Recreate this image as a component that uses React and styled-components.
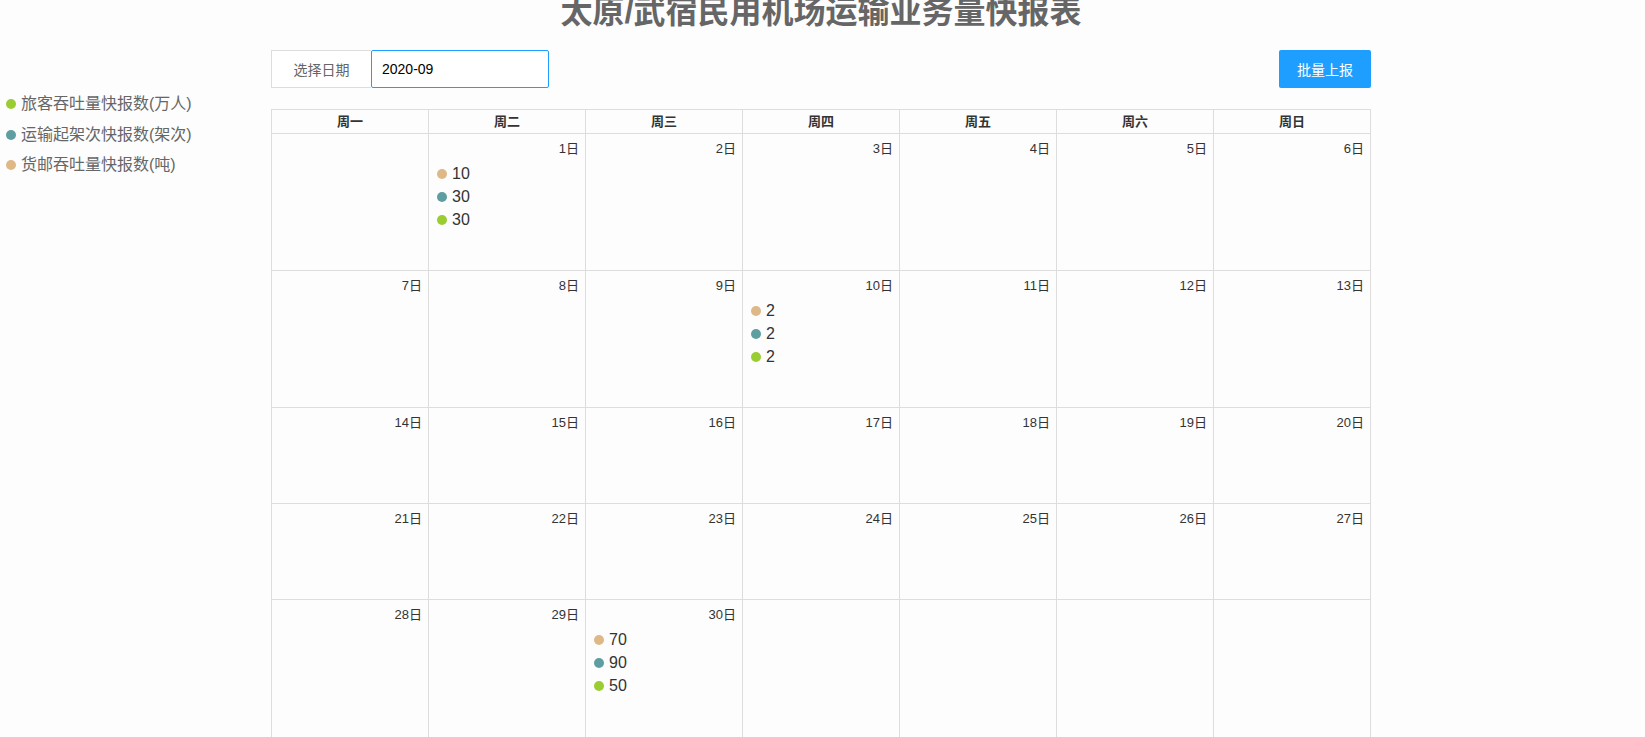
import React from "react";
import styled, { createGlobalStyle } from "styled-components";

const GlobalStyle = createGlobalStyle`
  html, body {
    margin: 0;
    padding: 0;
    background: #fdfdfd;
    overflow: hidden;
    font-family: "Liberation Sans", "Noto Sans CJK SC", sans-serif;
    color: #333;
  }
`;

const legend = [
  { color: "#9acd32", label: "旅客吞吐量快报数(万人)" },
  { color: "#5f9ea0", label: "运输起架次快报数(架次)" },
  { color: "#deb887", label: "货邮吞吐量快报数(吨)" },
];

const weekDays = ["周一", "周二", "周三", "周四", "周五", "周六", "周日"];

// values per day: [cargo, flights, passengers]
const reports = {
  1: [10, 30, 30],
  10: [2, 2, 2],
  30: [70, 90, 50],
};

const dotColors = ["#deb887", "#5f9ea0", "#9acd32"];

// Sept 2020 starts on a Tuesday
const buildWeeks = () => {
  const cells = [null];
  for (let d = 1; d <= 30; d++) cells.push(d);
  while (cells.length % 7) cells.push(null);
  const weeks = [];
  for (let i = 0; i < cells.length; i += 7) weeks.push(cells.slice(i, i + 7));
  return weeks;
};

const App = () => {
  const weeks = buildWeeks();
  return (
    <>
      <GlobalStyle />
      <Page>
        <Legend>
          {legend.map((l) => (
            <LegendItem key={l.label}>
              <Dot color={l.color} />
              {l.label}
            </LegendItem>
          ))}
        </Legend>
        <Main>
          <Title>太原/武宿民用机场运输业务量快报表</Title>
          <Toolbar>
            <DateGroup>
              <DateLabel>选择日期</DateLabel>
              <DateInput defaultValue="2020-09" readOnly />
            </DateGroup>
            <Button>批量上报</Button>
          </Toolbar>
          <Calendar>
            {weekDays.map((w) => (
              <HeadCell key={w}>{w}</HeadCell>
            ))}
            {weeks.map((week, wi) =>
              week.map((day, di) => (
                <DayCell key={`${wi}-${di}`} last={wi === weeks.length - 1}>
                  {day && <DayNum>{day}日</DayNum>}
                  {day && reports[day] && (
                    <ValueList>
                      {reports[day].map((v, i) => (
                        <Value key={i}>
                          <Dot color={dotColors[i]} />
                          {v}
                        </Value>
                      ))}
                    </ValueList>
                  )}
                </DayCell>
              ))
            )}
          </Calendar>
        </Main>
      </Page>
    </>
  );
};

export default App;

const Page = styled.div`
  display: flex;
  align-items: flex-start;
  height: 737px;
  overflow: hidden;
`;

const Legend = styled.div`
  width: 271px;
  padding: 89px 0 0 6px;
  box-sizing: border-box;
  flex-shrink: 0;
`;

const LegendItem = styled.div`
  display: flex;
  align-items: center;
  gap: 5px;
  font-size: 16px;
  line-height: 30.5px;
  color: #666;
`;

const Dot = styled.span`
  display: inline-block;
  width: 10px;
  height: 10px;
  border-radius: 50%;
  background: ${(p) => p.color};
  flex-shrink: 0;
`;

const Main = styled.div`
  width: 1100px;
  margin-top: -10px;
`;

const Title = styled.h1`
  margin: 0;
  font-size: 32px;
  line-height: 44px;
  font-weight: bold;
  color: #666;
  text-align: center;
  white-space: nowrap;
`;

const Toolbar = styled.div`
  display: flex;
  justify-content: space-between;
  align-items: center;
  margin-top: 16px;
`;

const DateGroup = styled.div`
  display: flex;
  height: 38px;
`;

const DateLabel = styled.div`
  width: 99px;
  border: 1px solid #ddd;
  border-right: none;
  background: #fff;
  color: #666;
  font-size: 14px;
  display: flex;
  align-items: center;
  justify-content: center;
`;

const DateInput = styled.input`
  width: 178px;
  height: 38px;
  box-sizing: border-box;
  border: 1px solid #1e9fff;
  border-radius: 2px;
  padding: 0 10px;
  font-family: inherit;
  font-size: 14px;
  color: #000;
  background: #fff;
  outline: none;
`;

const Button = styled.button`
  width: 92px;
  height: 38px;
  border: none;
  border-radius: 2px;
  background: #1e9fff;
  color: #fff;
  font-family: inherit;
  font-size: 14px;
  cursor: pointer;
`;

const Calendar = styled.div`
  display: grid;
  grid-template-columns: repeat(7, 1fr);
  margin-top: 21px;
  border-left: 1px solid #ddd;
  border-top: 1px solid #ddd;
`;

const HeadCell = styled.div`
  height: 23px;
  line-height: 23px;
  text-align: center;
  font-size: 13px;
  font-weight: bold;
  color: #333;
  border-right: 1px solid #ddd;
  border-bottom: 1px solid #ddd;
`;

const DayCell = styled.div`
  min-height: ${(p) => (p.last ? "200px" : "96px")};
  padding: 5px 6px 0 8px;
  box-sizing: border-box;
  border-right: 1px solid #ddd;
  border-bottom: 1px solid #ddd;
`;

const DayNum = styled.div`
  text-align: right;
  font-size: 13px;
  line-height: 20px;
  color: #333;
`;

const ValueList = styled.div`
  margin: 3px 0 39px;
`;

const Value = styled.div`
  display: flex;
  align-items: center;
  gap: 5px;
  font-size: 16px;
  line-height: 23px;
  color: #333;
`;
